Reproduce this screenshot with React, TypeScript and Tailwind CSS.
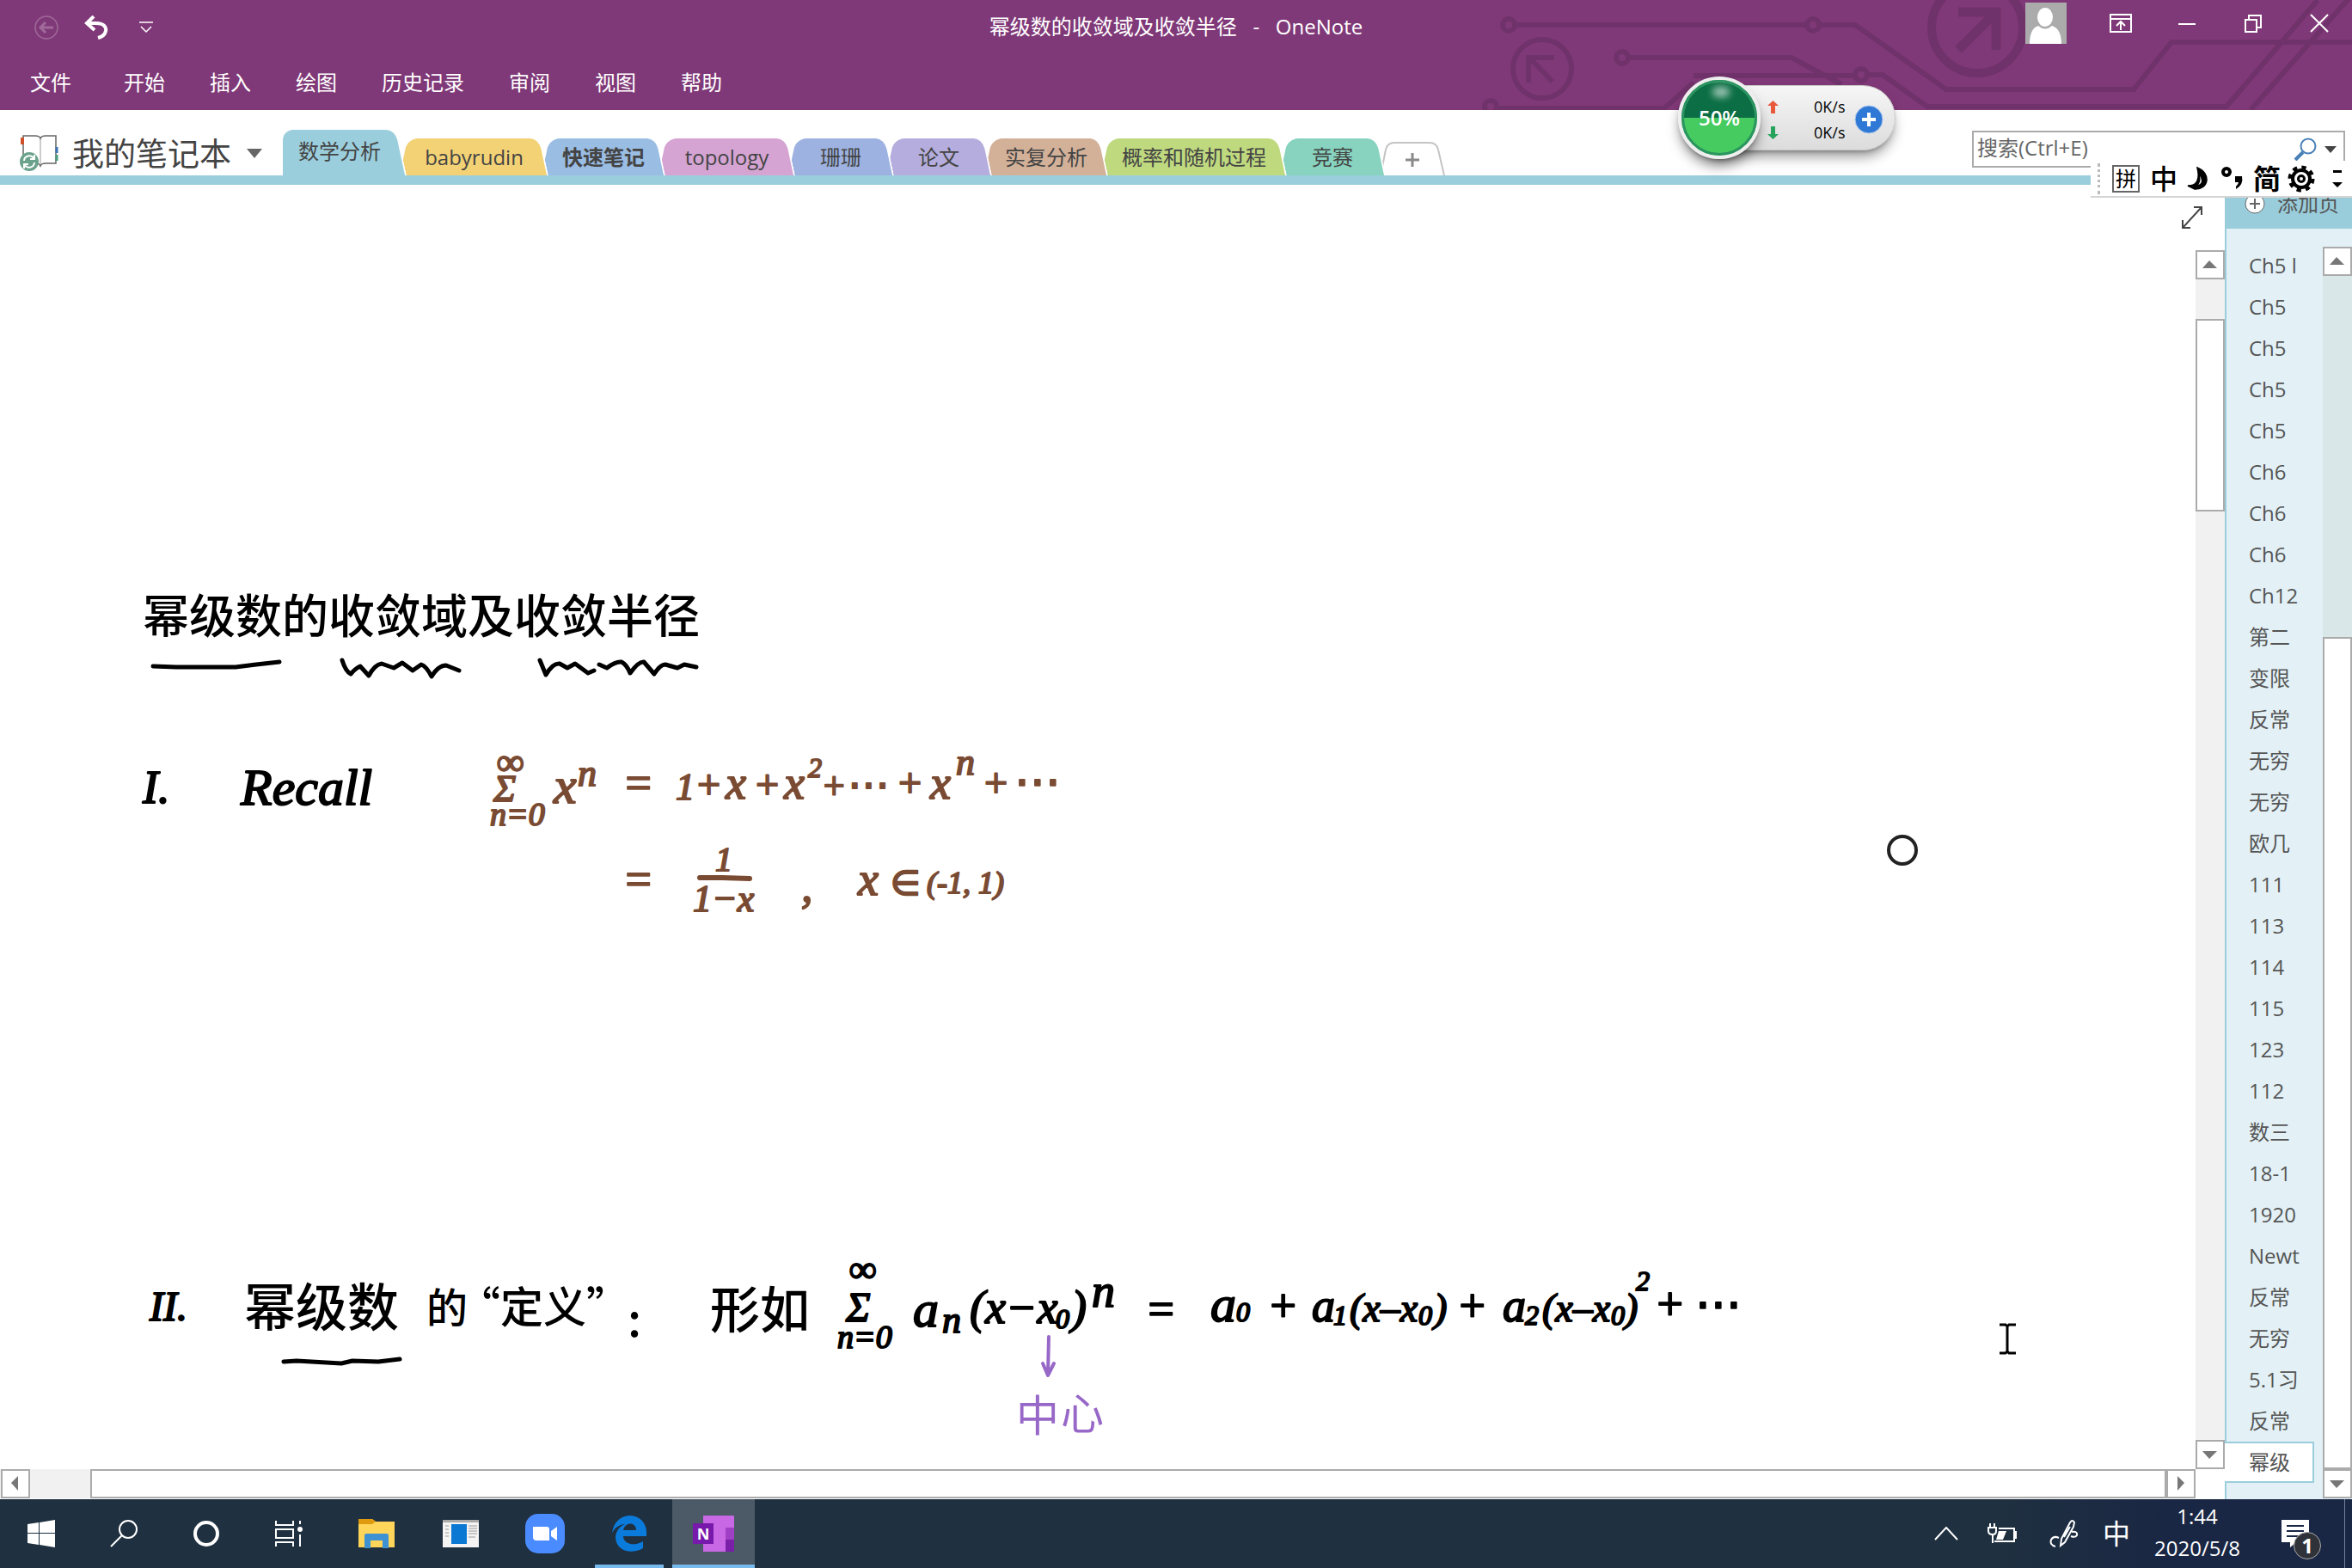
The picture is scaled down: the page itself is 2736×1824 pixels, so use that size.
import type { ReactNode } from 'react';

const MENU = ['开始', '插入', '绘图', '历史记录', '审阅', '视图', '帮助'];

const TABS = [
  { name: 'babyrudin', width: 'w-[173px]', bg: 'bg-[#f3d275]' },
  { name: '快速笔记', width: 'w-[144px]', bg: 'bg-[#9abde4]', bold: true },
  { name: 'topology', width: 'w-[159px]', bg: 'bg-[#d5a4d3]' },
  { name: '珊珊', width: 'w-[122px]', bg: 'bg-[#9db2e1]' },
  { name: '论文', width: 'w-[122px]', bg: 'bg-[#b4addd]' },
  { name: '实复分析', width: 'w-[144px]', bg: 'bg-[#d3b098]' },
  { name: '概率和随机过程', width: 'w-[216px]', bg: 'bg-[#bfd97f]' },
  { name: '竞赛', width: 'w-[122px]', bg: 'bg-[#87d3bf]' },
];

const PAGES = [
  'Ch5 l', 'Ch5', 'Ch5', 'Ch5', 'Ch5', 'Ch6', 'Ch6', 'Ch6', 'Ch12', '第二',
  '变限', '反常', '无穷', '无穷', '欧几', '111', '113', '114', '115', '123',
  '112', '数三', '18-1', '1920', 'Newt', '反常', '无穷', '5.1习', '反常', '幂级',
];

// One handwritten run on the note page: text, x, baseline y, size
type Run = [string, number, number, number];

const HEADINGS: Run[] = [
  ['幂级数的收敛域及收敛半径', 166, 522, 54],
  ['幂级数', 284, 1328, 60],
  ['的', 496, 1324, 48],
  ['“定义”', 532, 1324, 50],
  [':', 730, 1340, 54],
  ['形如', 826, 1330, 58],
];

const BLACK_MATH: Run[] = [
  ['I.', 166, 719, 54],
  ['Recall', 280, 721, 60],
  ['II.', 174, 1321, 48],
  ['∞', 988, 1276, 44],
  ['Σ', 984, 1322, 48],
  ['n=0', 974, 1353, 38],
  ['a', 1062, 1328, 60],
  ['n', 1096, 1335, 44],
  ['(x−x', 1128, 1324, 54],
  ['0', 1228, 1330, 32],
  [')', 1246, 1324, 54],
  ['n', 1270, 1305, 54],
  ['=', 1332, 1326, 54],
  ['a', 1408, 1322, 60],
  ['0', 1438, 1322, 32],
  ['+', 1474, 1322, 54],
  ['a', 1526, 1322, 54],
  ['1', 1551, 1326, 32],
  ['(x–x', 1570, 1322, 46],
  ['0', 1650, 1326, 32],
  [')', 1668, 1322, 46],
  ['+', 1694, 1322, 54],
  ['a', 1748, 1322, 54],
  ['2', 1774, 1326, 32],
  ['(x–x', 1794, 1322, 46],
  ['0', 1874, 1326, 32],
  [')', 1890, 1322, 46],
  ['2', 1903, 1286, 32],
  ['+', 1924, 1320, 54],
  ['⋯', 1972, 1320, 54],
];

const BROWN_MATH: Run[] = [
  ['∞', 578, 686, 44],
  ['Σ', 574, 717, 44],
  ['n=0', 570, 745, 38],
  ['x', 644, 719, 60],
  ['n', 672, 699, 44],
  ['=', 724, 714, 54],
  ['1', 786, 715, 44],
  ['+', 808, 714, 48],
  ['x', 844, 714, 54],
  ['+', 876, 714, 48],
  ['x', 912, 714, 54],
  ['2', 940, 689, 32],
  ['+', 955, 714, 44],
  ['⋯', 986, 714, 48],
  ['+', 1042, 712, 48],
  ['x', 1082, 714, 54],
  ['n', 1112, 686, 44],
  ['+', 1142, 712, 48],
  ['⋯', 1180, 712, 54],
  ['=', 724, 826, 54],
  ['1', 832, 798, 40],
  ['1−x', 806, 845, 44],
  [',', 932, 834, 54],
  ['x', 998, 826, 54],
  ['∈', 1036, 826, 40],
  ['(-1, 1)', 1078, 824, 36],
];

const PURPLE: Run[] = [
  ['中', 1182, 1450, 50],
  ['心', 1234, 1448, 50],
];

function Runs({ runs }: { runs: Run[] }) {
  return (
    <>
      {runs.map(([text, x, y, size], i) => (
        <text key={i} x={x} y={y} fontSize={size}>{text}</text>
      ))}
    </>
  );
}

function Circuit() {
  return (
    <svg viewBox="1720 0 1016 128" className="absolute right-0 top-0 h-32 w-[1016px]" fill="none" stroke="#70326a" strokeWidth="6" aria-hidden="true">
      <circle cx="1755" cy="29" r="7" />
      <path d="M1763 29H2101M2117 29H2158L2264 104H2482L2526 49H2736" />
      <circle cx="2109" cy="29" r="7" />
      <circle cx="1794" cy="80" r="34" />
      <path d="M1778 96V67H1808M1780 68L1806 95" />
      <circle cx="1887" cy="67" r="7" />
      <path d="M1895 67H2084L2142 98" />
      <circle cx="2165" cy="87" r="7" />
      <path d="M1970 88H2157M2173 87H2190L2242 124H2590L2696 0M2618 128L2736 -6" />
      <circle cx="1734" cy="124" r="7" />
      <path d="M1742 126H1936L1970 96" />
      <circle cx="2300" cy="32" r="53" strokeWidth="10" />
      <path d="M2278 14H2322V58M2320 16L2278 58" strokeWidth="11" />
    </svg>
  );
}

function TitleBar() {
  return (
    <header className="relative h-32 shrink-0 bg-[#803978] text-white">
      <Circuit />
      <div className="relative flex h-[60px] items-center pt-0.5">
        <div className="flex flex-1 items-center pt-0.5">
          <button aria-label="返回" className="ml-10 text-[#9f6a99]">
            <svg width="28" height="28" viewBox="0 0 28 28" fill="none" stroke="currentColor" strokeWidth="1.5">
              <circle cx="14" cy="14" r="13" />
              <path d="M7 14H22M13 8L7 14L13 20" strokeWidth="3" />
            </svg>
          </button>
          <button aria-label="撤消" className="ml-[30px]">
            <svg width="28" height="28" viewBox="0 0 28 28" fill="none" stroke="currentColor" strokeWidth="4">
              <path d="M11 1L3 9L12 17M4 9H14C23 9 26 14 25 18C24 23 20 25 16 26" />
            </svg>
          </button>
          <button aria-label="自定义快速访问工具栏" className="ml-9">
            <svg width="16" height="14" viewBox="0 0 16 14" fill="none" stroke="currentColor" strokeWidth="1.5">
              <path d="M0 1H16M2 6L8 12L14 6" />
            </svg>
          </button>
        </div>
        <h1 className="whitespace-pre text-2xl">幂级数的收敛域及收敛半径   -   OneNote</h1>
        <div className="flex flex-1 items-center justify-end">
          <button aria-label="帐户" className="mb-2 mr-6">
            <svg width="48" height="48" viewBox="0 0 48 48">
              <rect width="48" height="48" fill="#ababab" />
              <ellipse cx="23" cy="17" rx="9" ry="11" fill="#fff" />
              <path d="M5 48C5 35 9 29 15 27Q23 34 31 27C38 29 42 36 42 48Z" fill="#fff" />
            </svg>
          </button>
          <WindowButton label="功能区显示选项">
            <path d="M3 5H27V25H3ZM3 10H27M15 23V13M10 18L15 13L20 18" />
          </WindowButton>
          <WindowButton label="最小化"><path d="M5 16H25" /></WindowButton>
          <WindowButton label="还原"><path d="M6 11H19V25H6ZM10 11V6H24V20H19" /></WindowButton>
          <WindowButton label="关闭"><path d="M5 5L25 25M25 5L5 25" /></WindowButton>
        </div>
      </div>
      <nav className="relative flex h-[68px] items-center text-2xl">
        <button className="mt-1 px-[35px]">文件</button>
        {MENU.map((m) => (
          <button key={m} className="mt-1 px-[26px]">{m}</button>
        ))}
      </nav>
    </header>
  );
}

function WindowButton({ label, children }: { label: string; children: ReactNode }) {
  return (
    <button aria-label={label} className="mb-2 flex w-[77px] justify-center">
      <svg width="30" height="30" viewBox="0 0 30 30" fill="none" stroke="currentColor" strokeWidth="2">{children}</svg>
    </button>
  );
}

function SectionTabs() {
  return (
    <div className="flex h-full items-end text-2xl text-[#444]">
      <button className="relative z-20 h-[53px] w-36 pb-1 pr-3">
        <span className="absolute inset-y-0 left-0 w-1/2 rounded-tl-xl bg-[#9bcedc]" />
        <span className="absolute inset-y-0 right-0 w-3/4 origin-bottom skew-x-[12deg] rounded-tr-xl border-r-2 border-white bg-[#9bcedc]" />
        <span className="relative">数学分析</span>
      </button>
      {TABS.map((t, i) => (
        <button key={t.name} className={`relative -ml-2 h-[43px] ${t.width}`} style={{ zIndex: TABS.length - i }}>
          <span className={`absolute inset-y-0 left-0 w-1/2 origin-bottom -skew-x-[12deg] rounded-tl-xl ${t.bg}`} />
          <span className={`absolute inset-y-0 right-0 w-3/4 origin-bottom skew-x-[12deg] rounded-tr-xl border-r-2 border-white ${t.bg}`} />
          <span className={`relative ${t.bold ? 'font-bold' : ''}`}>{t.name}</span>
        </button>
      ))}
      <button aria-label="新建分区" className="-ml-2 h-[39px] w-20">
        <svg width="80" height="39" viewBox="0 0 80 39" fill="none">
          <path d="M3 39L9 9Q11 1 19 1H60Q68 1 70 9L77 39" stroke="#c4c4c4" strokeWidth="2" />
          <path d="M40 13V29M32 21H48" stroke="#8a8a8a" strokeWidth="3" />
        </svg>
      </button>
    </div>
  );
}

function NotebookBar() {
  return (
    <div className="relative flex h-[87px] shrink-0 border-b-[11px] border-[#9bcedc]">
      <button className="flex h-full w-[329px] items-center pl-[22px] pt-6 text-[37px] leading-none text-[#444]">
        <svg width="48" height="44" viewBox="0 0 48 44" fill="none" className="mr-[14px]">
          <path d="M5 2H19Q24 2 25 5Q26 2 31 2H43V34H31Q26 34 25 37Q24 34 19 34H5Z" stroke="#666" strokeWidth="1.5" />
          <path d="M25 5V36" stroke="#999" />
          <path d="M4 4V12" stroke="#d0502c" strokeWidth="4" />
          <path d="M44 15V22" stroke="#3c72b8" strokeWidth="3" />
          <path d="M44 24V31" stroke="#4a9e83" strokeWidth="3" />
          <circle cx="12" cy="32" r="11" fill="#6ba28c" />
          <path d="M6 31A6 6 0 0 1 17 28M18 33A6 6 0 0 1 7 36M18 24V29H13M6 40V35H11" stroke="#fff" strokeWidth="2" />
        </svg>
        <span>我的笔记本</span>
        <svg width="18" height="11" viewBox="0 0 18 11" className="ml-[18px]"><path d="M0 0H18L9 11Z" fill="#666" /></svg>
      </button>
      <SectionTabs />
      <label className="ml-auto mr-2 mt-6 flex h-[43px] w-[434px] items-center border-2 border-[#ababab] bg-white pr-2">
        <input aria-label="搜索" placeholder="搜索(Ctrl+E)" className="w-0 flex-1 pb-1 pl-1 text-2xl outline-none placeholder:text-[#666]" />
        <svg width="28" height="28" viewBox="0 0 28 28" fill="none" stroke="#4a80b8">
          <circle cx="17" cy="10" r="8.500" strokeWidth="2" />
          <path d="M11 17L2 26" strokeWidth="4" />
        </svg>
        <svg width="14" height="8" viewBox="0 0 14 8" className="ml-2"><path d="M0 0H14L7 8Z" fill="#444" /></svg>
      </label>
      <ImeBar />
    </div>
  );
}

function ImeBar() {
  return (
    <div className="absolute right-0 top-[59px] z-30 flex h-[43px] w-[304px] items-center border-b-2 border-[#d4d4d4] bg-white pl-2 text-black">
      <span className="h-9 w-0 border-l-3 border-dotted border-[#bbb]" />
      <button className="ml-3.5 flex h-8 w-8 items-center justify-center border-2 border-[#666] text-2xl">拼</button>
      <button className="ml-3 text-[32px] font-medium leading-none">中</button>
      <button aria-label="半角" className="ml-2.5">
        <svg width="28" height="28" viewBox="0 0 28 28"><path d="M13 1C30 8 26 27 10 26L2 22Q18 22 13 1ZM14 6Q19 19 10 23Q25 21 14 6" fill="#000" fillRule="evenodd" stroke="#000" strokeWidth="1.500" /></svg>
      </button>
      <button aria-label="中文标点" className="ml-3">
        <svg width="28" height="30" viewBox="0 0 28 30">
          <circle cx="7" cy="7" r="4" fill="none" stroke="#000" strokeWidth="4" />
          <path d="M17 12H25Q27 22 18 27V24Q21 21 21 19H17Z" />
        </svg>
      </button>
      <button className="ml-2.5 text-[32px] font-bold leading-none">简</button>
      <button aria-label="设置" className="ml-2">
        <svg width="32" height="32" viewBox="0 0 32 32" fill="none" stroke="#000">
          <circle cx="16" cy="16" r="13.500" strokeWidth="4" strokeDasharray="5.300 5.300" />
          <circle cx="16" cy="16" r="10" strokeWidth="4" />
          <circle cx="16" cy="16" r="3.500" strokeWidth="3" />
        </svg>
      </button>
      <button aria-label="选项" className="ml-5">
        <svg width="12" height="20" viewBox="0 0 12 20"><path d="M1 0H11V3H1ZM0 14H12L6 20Z" /></svg>
      </button>
    </div>
  );
}

const ARROWS = {
  up: 'M8 21H25L16 12Z',
  down: 'M8 13H25L16 22Z',
  left: 'M12 16L20 8V25Z',
  right: 'M21 16L13 8V25Z',
};

function ScrollButton({ dir, label }: { dir: keyof typeof ARROWS; label: string }) {
  return (
    <button aria-label={label} className="h-[34px] w-[34px] shrink-0 border-2 border-[#ababab] bg-white">
      <svg viewBox="2 2 30 30" className="h-full w-full"><path d={ARROWS[dir]} fill="#777" /></svg>
    </button>
  );
}

function InkPage() {
  return (
    <div className="relative min-w-0 flex-1 overflow-hidden">
      <svg className="absolute inset-0 h-full w-full" aria-label="手写笔记">
        <g className="font-['Noto_Sans_CJK_SC',sans-serif] font-medium" fill="#000">
          <Runs runs={HEADINGS} />
        </g>
        <g className="font-['Noto_Sans_CJK_SC',sans-serif]" fill="#9868c8">
          <Runs runs={PURPLE} />
        </g>
        <g className="font-['Liberation_Serif','DejaVu_Sans',serif] italic" strokeWidth="2" strokeLinejoin="round">
          <g fill="#000" stroke="#000"><Runs runs={BLACK_MATH} /></g>
          <g fill="#7a4b33" stroke="#7a4b33"><Runs runs={BROWN_MATH} /></g>
        </g>

        {/* underlines, squiggles, fraction bar, arrow */}
        <g fill="none" strokeLinecap="round" strokeLinejoin="round">
          <g stroke="#000" strokeWidth="5">
            <path d="M178 560L205 561L274 561L298 558L325 555" />
            <path d="M398 553Q402 566 408 569Q414 562 419 560L429 571Q436 558 444 557L458 562L468 556L480 565L490 558Q496 560 502 572Q510 559 519 559L534 565" />
            <path d="M628 553L635 570Q643 556 651 557L660 562L669 557L684 568L691 565" />
            <path d="M697 558L706 562Q716 554 723 555Q729 558 733 568Q743 554 749 555L761 569Q768 558 774 558L788 562L796 558L810 561" />
            <path d="M330 1369L345 1368L397 1371L410 1368L440 1369L465 1366" />
          </g>
          <path d="M814 806L840 806L872 807" stroke="#7a4b33" strokeWidth="6" />
          <path d="M1220 1340L1219 1384M1213 1371L1219 1385L1226 1371" stroke="#9868c8" strokeWidth="4" />
        </g>

        {/* pen hover ring and text cursor */}
        <circle cx="2213" cy="774" r="16" fill="none" stroke="#222" strokeWidth="4" />
        <path d="M2326 1326H2333L2335 1328L2337 1326H2345M2335 1328V1357M2326 1359H2333L2335 1357L2337 1359H2345" fill="none" stroke="#000" strokeWidth="3" />
      </svg>
    </div>
  );
}

function Workspace() {
  return (
    <main className="flex min-w-0 flex-1 flex-col">
      <div className="flex min-h-0 flex-1">
        <InkPage />
        <div className="flex w-[50px] shrink-0 flex-col items-end">
          <button aria-label="全屏" className="mb-6 mr-[25px] mt-6">
            <svg width="26" height="28" viewBox="0 0 26 28" fill="none" stroke="#444" strokeWidth="2">
              <path d="M2 26L24 2M15 2H24V11M2 17V26H11" />
            </svg>
          </button>
          <div className="flex min-h-0 w-[34px] flex-1 flex-col bg-[#f1f1f1]">
            <ScrollButton dir="up" label="向上滚动" />
            <div className="mt-[46px] h-56 border-2 border-[#ababab] bg-white" />
            <div className="flex-1" />
            <ScrollButton dir="down" label="向下滚动" />
          </div>
        </div>
      </div>
      <div className="mb-px mr-[34px] flex h-[34px] shrink-0 bg-[#f1f1f1] pl-px">
        <ScrollButton dir="left" label="向左滚动" />
        <div className="ml-[70px] flex-1 border-2 border-[#ababab] bg-white" />
        <ScrollButton dir="right" label="向右滚动" />
      </div>
    </main>
  );
}

function PageList() {
  return (
    <aside className="flex w-[148px] shrink-0 flex-col bg-[#e3f1f6] text-2xl text-[#555]">
      <button className="flex h-[51px] shrink-0 items-center bg-[#99cddc] pb-2 pl-[23px] text-[#555]">
        <svg width="24" height="24" viewBox="0 0 24 24" fill="#fff" stroke="#666">
          <circle cx="12" cy="12" r="11" />
          <path d="M12 6V18M6 12H18" strokeWidth="2" />
        </svg>
        <span className="ml-3.5 whitespace-nowrap">添加页</span>
      </button>
      <div className="flex min-h-0 flex-1">
        <ul className="flex min-w-0 flex-1 flex-col border-l-2 border-[#9bcedc] pt-[19px]">
          {PAGES.map((p, i) => (
            <li key={i} className="flex h-12 shrink-0">
              <a
                href="#page"
                className={`-ml-0.5 flex w-[104px] items-center whitespace-nowrap pl-7 ${i === PAGES.length - 1 ? 'border-2 border-l-0 border-[#9bcedc] bg-white' : ''}`}
              >
                {p}
              </a>
            </li>
          ))}
        </ul>
        <div className="mb-px mt-[21px] flex w-[34px] flex-col bg-[#d9e7e8]">
          <ScrollButton dir="up" label="页面列表向上" />
          <div className="h-[420px] shrink-0" />
          <div className="min-h-0 flex-1 border-2 border-[#ababab] bg-white" />
          <ScrollButton dir="down" label="页面列表向下" />
        </div>
      </div>
    </aside>
  );
}

function SpeedBall() {
  return (
    <div className="absolute left-[1952px] top-[89px] z-40 flex items-center">
      <div className="absolute inset-y-[10px] left-10 right-0 rounded-r-full border border-[#c8c8c8] bg-linear-to-b from-[#f6f6f6] to-[#dcdcdc] shadow-lg shadow-black/40" />
      <div className="relative flex h-24 w-24 items-center justify-center rounded-full border-4 border-[#eee] bg-linear-to-b from-[#0b6e44] from-50% to-[#45cb60] to-50% text-2xl font-semibold text-white shadow-lg shadow-black/50">
        <span className="absolute inset-0 rounded-full border-3 border-[#2b9460]" />
        <span className="absolute left-9 top-2 h-3 w-5 rounded-full bg-white/60 blur-xs" />
        <span className="relative">50%</span>
      </div>
      <div className="relative flex flex-col gap-1.5 pl-2 pt-1 text-lg leading-6 text-black">
        <div className="flex items-center gap-[41px]">
          <svg width="13" height="15" viewBox="0 0 13 15"><path d="M6.500 0L13 6H9V15H4V6H0Z" fill="#e8593c" /></svg>
          0K/s
        </div>
        <div className="flex items-center gap-[41px]">
          <svg width="13" height="15" viewBox="0 0 13 15"><path d="M6.500 15L13 9H9V0H4V9H0Z" fill="#27a35b" /></svg>
          0K/s
        </div>
      </div>
      <button aria-label="加速" className="relative ml-2.5 mr-[14px] mt-1">
        <svg width="34" height="34" viewBox="0 0 34 34">
          <circle cx="17" cy="17" r="16" fill="#2f78d6" stroke="#a9c6ea" />
          <path d="M17 9V25M9 17H25" stroke="#fff" strokeWidth="4" />
        </svg>
      </button>
    </div>
  );
}

function TaskButton({ label, className = '', children }: { label: string; className?: string; children: ReactNode }) {
  return (
    <button aria-label={label} className={`relative flex h-full w-24 items-center justify-center ${className}`}>
      {children}
    </button>
  );
}

function Taskbar() {
  return (
    <footer className="flex h-20 shrink-0 items-center bg-linear-to-r from-[#1f3040] from-85% to-[#1a2744] to-92% text-2xl text-white">
      <div className="flex h-full">
        <TaskButton label="开始">
          <svg width="32" height="32" viewBox="0 0 32 32" fill="#fff"><path d="M0 5L13 3V15H0ZM14 3L32 0V15H14ZM0 16H13V29L0 27ZM14 16H32V32L14 29Z" /></svg>
        </TaskButton>
        <TaskButton label="搜索">
          <svg width="32" height="32" viewBox="0 0 32 32" fill="none" stroke="#fff" strokeWidth="2"><circle cx="21" cy="11" r="10" /><path d="M14 18L1 31" /></svg>
        </TaskButton>
        <TaskButton label="Cortana">
          <svg width="32" height="32" viewBox="0 0 32 32" fill="none" stroke="#fff" strokeWidth="4"><circle cx="16" cy="16" r="13" /></svg>
        </TaskButton>
        <TaskButton label="任务视图">
          <svg width="32" height="32" viewBox="0 0 32 32" fill="none" stroke="#fff" strokeWidth="2">
            <path d="M1 1V6H21V1M1 31V26H21V31M1 11H21V21H1ZM29 1V5M29 17V31" />
            <circle cx="29" cy="11" r="3" fill="#fff" stroke="none" />
          </svg>
        </TaskButton>
      </div>
      <div className="ml-1.5 flex h-full gap-0.5">
        <TaskButton label="文件资源管理器">
          <svg width="42" height="36" viewBox="0 0 42 36">
            <path d="M0 1H16L20 4H42V34H0Z" fill="#ffd55a" />
            <path d="M0 1H16L20 4L16 7H0Z" fill="#e09a10" />
            <path d="M7 35V20Q7 18 9 18H33Q35 18 35 20V35H28V26H14V35Z" fill="#3f92d2" />
          </svg>
        </TaskButton>
        <TaskButton label="应用">
          <svg width="42" height="32" viewBox="0 0 42 32">
            <rect width="42" height="32" fill="#f4f4f4" />
            <rect width="42" height="3" fill="#aaa" />
            <rect x="10" y="5" width="18" height="23" fill="#0b78d4" />
            <path d="M30 7H40M30 10H40M30 13H40M30 16H40M30 20H38M3 7H7M3 11H7M3 15H7M3 19H7" stroke="#999" />
          </svg>
        </TaskButton>
        <TaskButton label="Zoom">
          <svg width="46" height="46" viewBox="0 0 46 46">
            <rect width="46" height="46" rx="15" fill="#4a8cff" />
            <path d="M9 15H25Q28 15 28 18V31H13Q9 31 9 27ZM30 20L37 15V31L30 26Z" fill="#fff" />
          </svg>
        </TaskButton>
        <TaskButton label="Edge">
          <svg width="40" height="42" viewBox="0 0 40 42" fill="#0b7bdb">
            <path d="M0 20C2 6 12 0 21 0C33 0 40 10 40 19V24H13C13 32 24 37 36 30V38C22 46 5 41 4 26C4 19 8 13 15 10C10 10 4 13 0 20ZM13 17H28C28 7 15 7 13 17Z" />
          </svg>
          <span className="absolute bottom-0 h-1 w-20 bg-[#76b9ed]" />
        </TaskButton>
        <TaskButton label="OneNote" className="bg-[#4c5a67]">
          <span className="flex h-[42px] w-[48px] items-center bg-linear-to-r from-transparent from-25% to-[#c868e4] to-25%">
            <span className="flex h-6 w-6 items-center justify-center bg-[#7719aa] text-lg font-bold leading-none">N</span>
            <span className="ml-auto flex h-full w-2.5 flex-col">
              <span className="flex-1 bg-[#c868e4]" />
              <span className="flex-1 bg-[#9f3fc4]" />
              <span className="flex-1 bg-[#7a1fa8]" />
            </span>
          </span>
          <span className="absolute inset-x-0 bottom-0 h-1 bg-[#76b9ed]" />
        </TaskButton>
      </div>

      <div className="ml-auto flex h-full items-center">
        <button aria-label="显示隐藏的图标" className="mr-[34px]">
          <svg width="28" height="16" viewBox="0 0 28 16" fill="none" stroke="#fff" strokeWidth="2"><path d="M1 15L14 1L27 15" /></svg>
        </button>
        <button aria-label="电源" className="mr-[38px]">
          <svg width="34" height="24" viewBox="0 0 34 24" fill="none" stroke="#fff" strokeWidth="2">
            <path d="M13 6H31V21H8M31 10H33V17H31M3 0V5M8 0V5M1 5H10V9Q10 13 6 13Q1 13 1 9ZM6 13V23" />
            <path d="M13 9H22L18 19H10Z" fill="#fff" stroke="none" />
          </svg>
        </button>
        <button aria-label="Windows Ink" className="mr-7">
          <svg width="34" height="34" viewBox="0 0 34 34" fill="none" stroke="#fff" strokeWidth="2">
            <path d="M13 31L14 23L24 4Q27 0 29 4L28 9L18 27ZM17 21L24 9M7 32Q0 30 2 24Q5 19 11 22M26 15Q33 14 32 19Q30 22 25 20" />
          </svg>
        </button>
        <button className="mr-5 text-[32px] leading-none">中</button>
        <button className="mb-1 w-[116px] text-center leading-[37px]">
          1:44<br />2020/5/8
        </button>
        <button aria-label="操作中心" className="relative ml-10 mr-[41px]">
          <svg width="32" height="32" viewBox="0 0 32 32">
            <path d="M0 0H32V26H17L10 32V26H0Z" fill="#fff" />
            <path d="M6 7H26M6 13H26M6 19H20" stroke="#1a2744" strokeWidth="2" />
          </svg>
          <span className="absolute left-3.5 top-3.5 flex h-8 w-8 items-center justify-center rounded-full border border-[#aaa] bg-[#2f3238] text-2xl font-bold">1</span>
        </button>
        <span className="mr-2 h-full w-px bg-[#76809a]" />
      </div>
    </footer>
  );
}

export default function App() {
  return (
    <div className="relative flex h-screen w-full flex-col overflow-hidden bg-white font-['Open_Sans','Noto_Sans_CJK_SC',sans-serif]">
      <TitleBar />
      <NotebookBar />
      <div className="flex min-h-0 flex-1">
        <Workspace />
        <PageList />
      </div>
      <Taskbar />
      <SpeedBall />
    </div>
  );
}
